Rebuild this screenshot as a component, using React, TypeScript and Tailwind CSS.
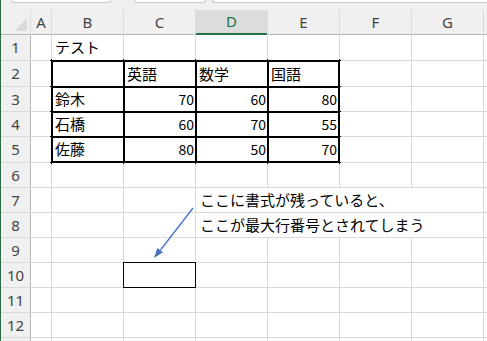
import React from "react";

const COLS = ["A", "B", "C", "D", "E", "F", "G"];
const ROWS = Array.from({ length: 13 }, (_, i) => i + 1);

const TABLE: string[][] = [
  ["", "英語", "数学", "国語"],
  ["鈴木", "70", "60", "80"],
  ["石橋", "60", "70", "55"],
  ["佐藤", "80", "50", "70"],
];

const jp = "font-['Noto_Sans_CJK_JP','Noto_Sans',sans-serif]";
const ui = "font-['Noto_Sans','Liberation_Sans',sans-serif]";

// cells that are hidden under the table block or the spilled-over note
function covered(row: number, col: number) {
  if (row >= 2 && row <= 5 && col >= 1 && col <= 4) return true;
  if (row >= 7 && row <= 8 && col >= 3) return true;
  return false;
}

function TopStrip() {
  return (
    <div className="flex h-[10px] items-start bg-[#f0f0f0]">
      <div className="ml-[10px] h-[3px] w-[100px] rounded-b-[3px] border border-t-0 border-[#c8c8c8] bg-white" />
      <div className="ml-[23px] h-[3px] w-[72px] rounded-b-[3px] border border-t-0 border-[#c8c8c8] bg-white" />
      <div className="ml-[6px] h-[3px] flex-1 rounded-bl-[3px] border border-r-0 border-t-0 border-[#c8c8c8] bg-white" />
    </div>
  );
}

function ColumnHeaders() {
  return (
    <>
      <div className="-mb-px flex items-end justify-end border-b border-[#b4b4b4] bg-[#f0f0f0] pb-[3px] pr-[3px]">
        <svg width="12" height="13" viewBox="0 0 12 13">
          <polygon points="12,0 12,13 0,13" fill="#dadada" />
        </svg>
      </div>
      {COLS.map((c) =>
        c === "D" ? (
          <div
            key={c}
            className={`-mb-px flex items-center justify-center border-b-2 border-[#217346] bg-[#dcdcdc] text-[15px] text-[#217346] ${ui}`}
          >
            {c}
          </div>
        ) : (
          <div
            key={c}
            className={`-mb-px flex items-center justify-center border-b border-[#b4b4b4] bg-[#f0f0f0] text-[15px] text-[#444] ${ui}`}
          >
            {c}
          </div>
        )
      )}
      <div className="-mb-px border-b border-[#b4b4b4] bg-[#f0f0f0]" />
    </>
  );
}

function RowCells({ row }: { row: number }) {
  return (
    <>
      <div
        className={`-mr-px flex items-center justify-center overflow-hidden border-r border-[#b4b4b4] bg-[#f0f0f0] text-[15px] text-[#444] ${ui}`}
      >
        {row < 13 ? row : null}
      </div>
      {COLS.map((c, i) => {
        if (covered(row, i)) return null;
        if (row === 1 && c === "B") {
          return (
            <div key={c} className={`flex items-center bg-white pl-[3px] text-[15px] text-black ${jp}`}>
              テスト
            </div>
          );
        }
        if (row === 10 && c === "C") {
          return <div key={c} className="-m-px border border-black bg-white" />;
        }
        return <div key={c} className="bg-white" />;
      })}
      <div className="bg-white" />
    </>
  );
}

function ScoreTable() {
  return (
    <div className="col-span-4 col-start-3 row-span-4 row-start-3 -m-[2px] grid grid-cols-[70px_70px_70px_69px] grid-rows-[24px_23px_23px_23px] gap-[2px] border-[3px] border-black bg-black">
      {TABLE.flatMap((r, ri) =>
        r.map((v, ci) => {
          const num = /^\d+$/.test(v);
          return (
            <div
              key={`${ri}-${ci}`}
              className={`flex items-center bg-white text-black ${jp} ${
                num ? "justify-end pr-px text-[14px]" : "pl-[2px] text-[15px]"
              }`}
            >
              {v}
            </div>
          );
        })
      )}
    </div>
  );
}

function Note() {
  return (
    <>
      <div className={`col-span-4 col-start-5 row-start-8 flex items-center bg-white pl-[4px] text-[15px] text-black ${jp}`}>
        ここに書式が残っていると、
      </div>
      <div className={`col-span-4 col-start-5 row-start-9 flex items-center bg-white pl-[4px] text-[15px] text-black ${jp}`}>
        ここが最大行番号とされてしまう
      </div>
    </>
  );
}

function Arrow() {
  return (
    <svg className="pointer-events-none absolute left-0 top-0" width="487" height="341" viewBox="0 0 487 341">
      <line x1="192" y1="208" x2="159.5" y2="250" stroke="#4472c4" strokeWidth="1.3" />
      <polygon points="153,258 162,252.3 156.4,248" fill="#4472c4" />
    </svg>
  );
}

export default function App() {
  return (
    <div className="relative h-[341px] w-[487px] overflow-hidden border-l border-[#2b6e47] bg-white">
      <TopStrip />
      <div className="grid grid-cols-[29px_20px_repeat(6,71px)_3px] grid-rows-[24px_25px_25px_24px_24px_25px_repeat(7,24px)_3px] gap-px bg-[#dadada]">
        <ColumnHeaders />
        <ScoreTable />
        <Note />
        {ROWS.map((r) => (
          <RowCells key={r} row={r} />
        ))}
      </div>
      <Arrow />
    </div>
  );
}
